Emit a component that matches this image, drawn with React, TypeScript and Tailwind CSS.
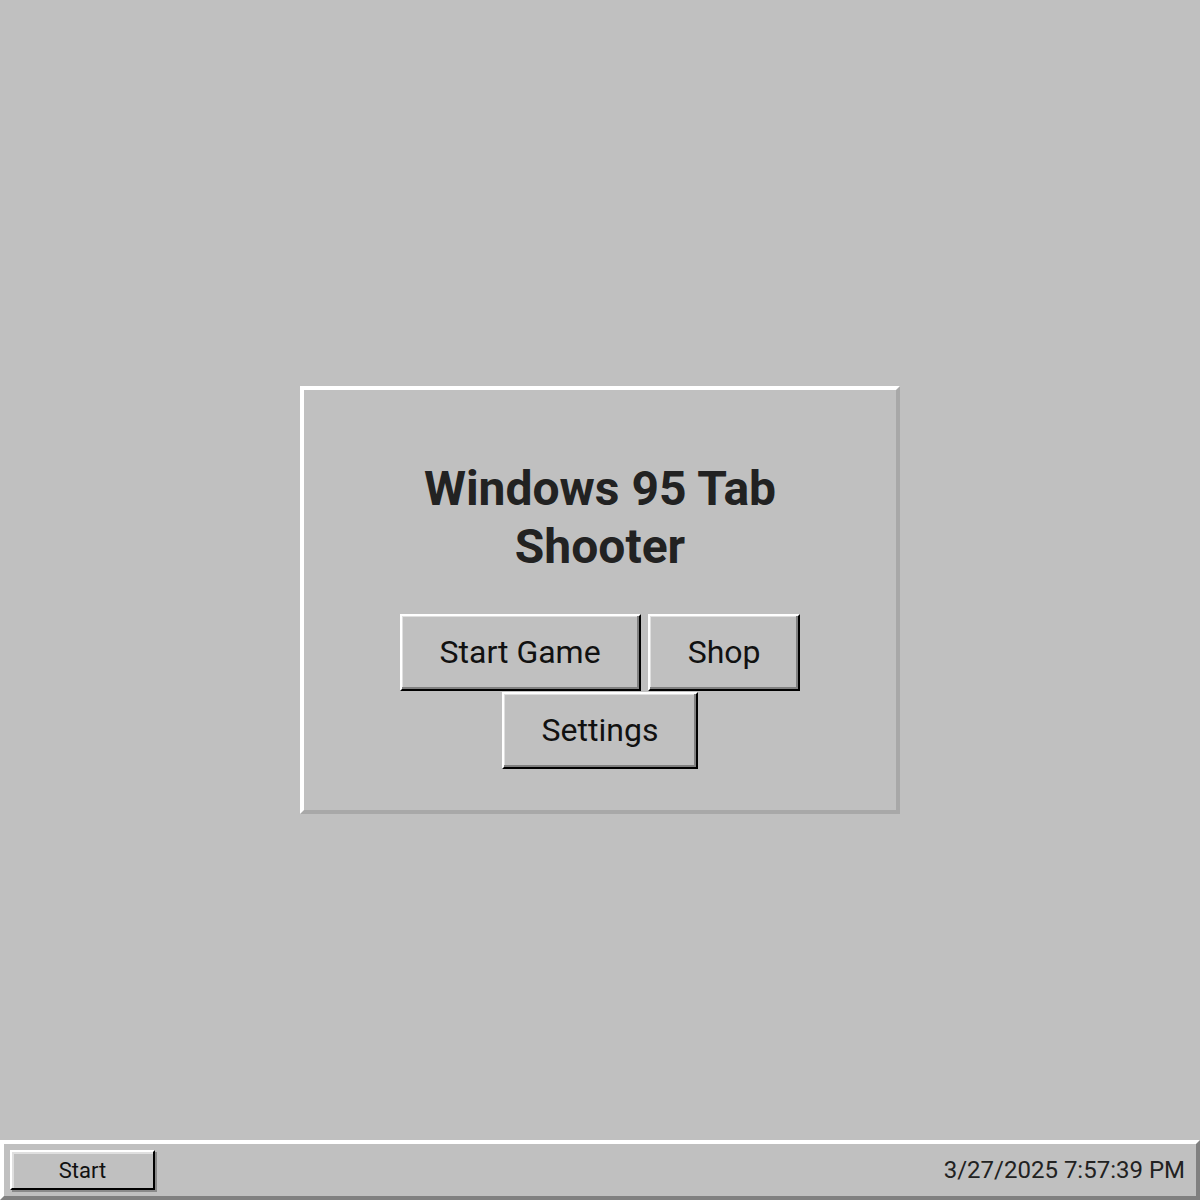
import { useState } from "react";

const menuItems = ["Start Game", "Shop", "Settings"];

function MenuButton({ label, onClick }: { label: string; onClick: () => void }) {
  return (
    <button
      onClick={onClick}
      className="h-[77px] px-[38px] border-2 border-t-white border-l-white border-b-black border-r-black bg-[#c0c0c0] text-[32px] leading-[37px] text-[#111] shadow-[inset_-2px_-2px_0_#808080,inset_1px_1px_0_#dfdfdf]"
    >
      {label}
    </button>
  );
}

export default function App() {
  const [screen, setScreen] = useState("menu");

  return (
    <div className="relative h-screen w-full bg-[#c0c0c0] font-['Roboto','Liberation_Sans',sans-serif] overflow-hidden">
      {/* Main menu window */}
      <div className="flex h-full items-center justify-center">
        <div className="w-[600px] border-4 border-t-white border-l-white border-b-[#a8a8a8] border-r-[#a8a8a8] px-10 pt-10 pb-[41px] text-center">
          <h1 className="mt-[30px] mb-[38px] text-[48px] leading-[57.6px] font-bold text-[#222]">
            Windows 95 Tab Shooter
          </h1>

          <div className="flex flex-wrap justify-center gap-x-[7px] gap-y-px">
            {menuItems.map((item) => (
              <MenuButton key={item} label={item} onClick={() => setScreen(item)} />
            ))}
          </div>
          <span className="hidden">{screen}</span>
        </div>
      </div>

      {/* Taskbar */}
      <div className="absolute bottom-0 left-0 right-0 flex h-[60px] items-center justify-between border-4 border-t-white border-l-white border-b-[#808080] border-r-[#808080] bg-[#c0c0c0] pl-[6px] pr-[11px]">
        <button className="flex h-[40px] w-[145px] items-center justify-center border-2 border-t-white border-l-white border-b-black border-r-black text-[22px] text-[#111] shadow-[2px_2px_0_#8a8a8a,inset_2px_2px_0_#dfdfdf]">
          Start
        </button>
        <div className="text-[24px] text-[#222]">3/27/2025 7:57:39 PM</div>
      </div>
    </div>
  );
}
